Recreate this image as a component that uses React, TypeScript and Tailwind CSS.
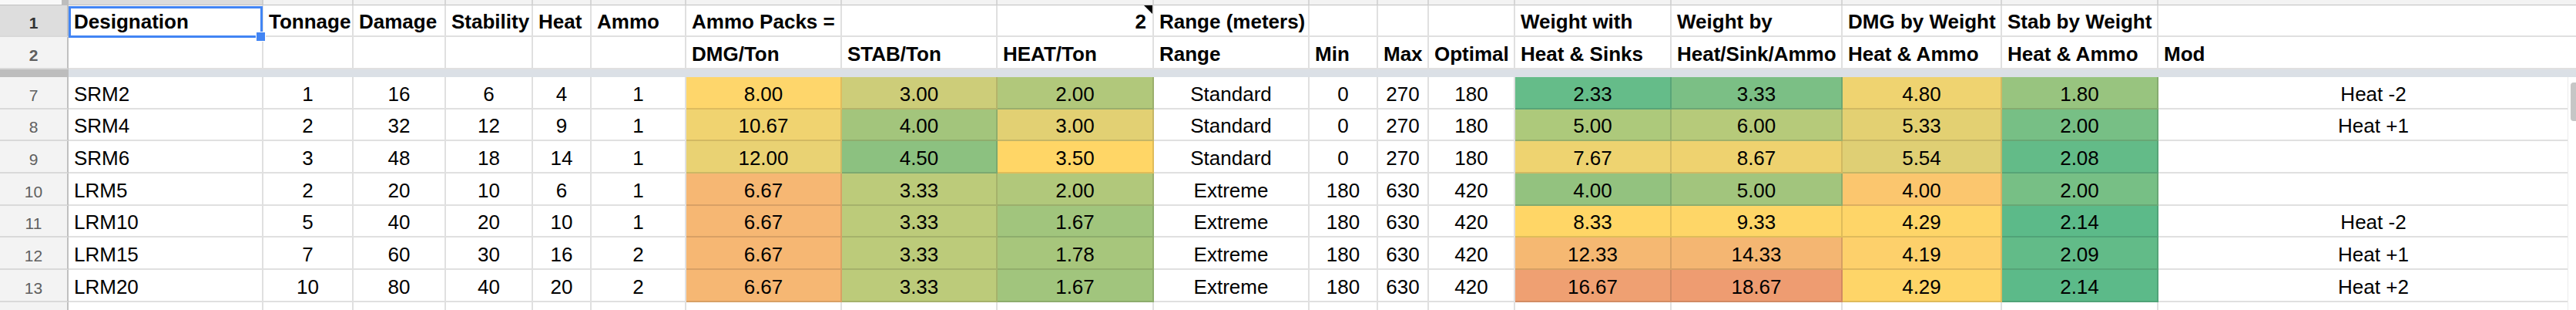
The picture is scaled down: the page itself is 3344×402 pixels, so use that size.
const COLS =
  "grid grid-cols-[89px_253px_117px_120px_113px_76px_123px_202px_202px_203px_202px_89px_66px_112px_203px_222px_207px_203px_560px]";

type Cell = { v: string; bg?: string };

const headerOne = [
  "Tonnage",
  "Damage",
  "Stability",
  "Heat",
  "Ammo",
  "Ammo Packs =",
  "",
  "2",
  "Range (meters)",
  "",
  "",
  "",
  "Weight with",
  "Weight by",
  "DMG by Weight",
  "Stab by Weight",
  "",
];

const headerTwo = [
  "",
  "",
  "",
  "",
  "",
  "",
  "DMG/Ton",
  "STAB/Ton",
  "HEAT/Ton",
  "Range",
  "Min",
  "Max",
  "Optimal",
  "Heat & Sinks",
  "Heat/Sink/Ammo",
  "Heat & Ammo",
  "Heat & Ammo",
  "Mod",
];

const rows: { n: number; name: string; cells: Cell[] }[] = [
  {
    n: 7,
    name: "SRM2",
    cells: [
      { v: "1" }, { v: "16" }, { v: "6" }, { v: "4" }, { v: "1" },
      { v: "8.00", bg: "bg-[#fed66b]" },
      { v: "3.00", bg: "bg-[#cdcd79]" },
      { v: "2.00", bg: "bg-[#b1c87b]" },
      { v: "Standard" }, { v: "0" }, { v: "270" }, { v: "180" },
      { v: "2.33", bg: "bg-[#65bc89]" },
      { v: "3.33", bg: "bg-[#7bbf85]" },
      { v: "4.80", bg: "bg-[#efd370]" },
      { v: "1.80", bg: "bg-[#98c47f]" },
      { v: "Heat -2" },
    ],
  },
  {
    n: 8,
    name: "SRM4",
    cells: [
      { v: "2" }, { v: "32" }, { v: "12" }, { v: "9" }, { v: "1" },
      { v: "10.67", bg: "bg-[#f0d370]" },
      { v: "4.00", bg: "bg-[#a3c57c]" },
      { v: "3.00", bg: "bg-[#e2d073]" },
      { v: "Standard" }, { v: "0" }, { v: "270" }, { v: "180" },
      { v: "5.00", bg: "bg-[#adc97b]" },
      { v: "6.00", bg: "bg-[#b6ca7a]" },
      { v: "5.33", bg: "bg-[#e3d072]" },
      { v: "2.00", bg: "bg-[#77bf85]" },
      { v: "Heat +1" },
    ],
  },
  {
    n: 9,
    name: "SRM6",
    cells: [
      { v: "3" }, { v: "48" }, { v: "18" }, { v: "14" }, { v: "1" },
      { v: "12.00", bg: "bg-[#e9d273]" },
      { v: "4.50", bg: "bg-[#8cc180]" },
      { v: "3.50", bg: "bg-[#ffd666]" },
      { v: "Standard" }, { v: "0" }, { v: "270" }, { v: "180" },
      { v: "7.67", bg: "bg-[#eed370]" },
      { v: "8.67", bg: "bg-[#eed26f]" },
      { v: "5.54", bg: "bg-[#dfcf74]" },
      { v: "2.08", bg: "bg-[#63bb88]" },
      { v: "" },
    ],
  },
  {
    n: 10,
    name: "LRM5",
    cells: [
      { v: "2" }, { v: "20" }, { v: "10" }, { v: "6" }, { v: "1" },
      { v: "6.67", bg: "bg-[#f6b773]" },
      { v: "3.33", bg: "bg-[#bccb7a]" },
      { v: "2.00", bg: "bg-[#b1c87b]" },
      { v: "Extreme" }, { v: "180" }, { v: "630" }, { v: "420" },
      { v: "4.00", bg: "bg-[#93c27f]" },
      { v: "5.00", bg: "bg-[#a2c57d]" },
      { v: "4.00", bg: "bg-[#fbc66e]" },
      { v: "2.00", bg: "bg-[#77bf85]" },
      { v: "" },
    ],
  },
  {
    n: 11,
    name: "LRM10",
    cells: [
      { v: "5" }, { v: "40" }, { v: "20" }, { v: "10" }, { v: "1" },
      { v: "6.67", bg: "bg-[#f6b773]" },
      { v: "3.33", bg: "bg-[#bccb7a]" },
      { v: "1.67", bg: "bg-[#a1c57d]" },
      { v: "Extreme" }, { v: "180" }, { v: "630" }, { v: "420" },
      { v: "8.33", bg: "bg-[#ffd666]" },
      { v: "9.33", bg: "bg-[#fed667]" },
      { v: "4.29", bg: "bg-[#fed568]" },
      { v: "2.14", bg: "bg-[#5cba89]" },
      { v: "Heat -2" },
    ],
  },
  {
    n: 12,
    name: "LRM15",
    cells: [
      { v: "7" }, { v: "60" }, { v: "30" }, { v: "16" }, { v: "2" },
      { v: "6.67", bg: "bg-[#f6b773]" },
      { v: "3.33", bg: "bg-[#bccb7a]" },
      { v: "1.78", bg: "bg-[#a7c67c]" },
      { v: "Extreme" }, { v: "180" }, { v: "630" }, { v: "420" },
      { v: "12.33", bg: "bg-[#f5b872]" },
      { v: "14.33", bg: "bg-[#f4b672]" },
      { v: "4.19", bg: "bg-[#fdd06b]" },
      { v: "2.09", bg: "bg-[#62bb88]" },
      { v: "Heat +1" },
    ],
  },
  {
    n: 13,
    name: "LRM20",
    cells: [
      { v: "10" }, { v: "80" }, { v: "40" }, { v: "20" }, { v: "2" },
      { v: "6.67", bg: "bg-[#f6b773]" },
      { v: "3.33", bg: "bg-[#bccb7a]" },
      { v: "1.67", bg: "bg-[#a1c57d]" },
      { v: "Extreme" }, { v: "180" }, { v: "630" }, { v: "420" },
      { v: "16.67", bg: "bg-[#efa072]" },
      { v: "18.67", bg: "bg-[#ee9c71]" },
      { v: "4.29", bg: "bg-[#fed568]" },
      { v: "2.14", bg: "bg-[#5cba89]" },
      { v: "Heat +2" },
    ],
  },
];

function RowNum({ n, active }: { n?: number; active?: boolean }) {
  return (
    <div
      className={`flex items-end justify-center pb-[6px] border-r-2 border-b-2 border-r-[#c0c0c0] border-b-[#d9d9d9] text-[21px] leading-none ${
        active ? "bg-[#dddddd] text-[#333]" : "bg-[#f3f3f3] text-[#5f5f5f]"
      }`}
    >
      {n}
    </div>
  );
}

export default function App() {
  return (
    <div className="relative w-[3344px] h-[402px] overflow-hidden bg-white text-black font-['Liberation_Sans',Arial,sans-serif] text-[26px]">
      {/* column letters strip, cut off at the top */}
      <div className={`${COLS} h-[7px]`}>
        <div className="flex justify-end bg-[#f8f8f8] border-b border-[#c0c0c0]">
          <div className="w-[9px] bg-[#bdbdbd]" />
        </div>
        <div className="bg-[#dcdcdc] border-r-2 border-b border-r-[#cfcfcf] border-b-[#c0c0c0]" />
        {Array.from({ length: 17 }).map((_, i) => (
          <div key={i} className="bg-[#f3f3f3] border-r-2 border-b border-r-[#d6d6d6] border-b-[#c0c0c0]" />
        ))}
      </div>

      {/* row 1 */}
      <div className={`${COLS} h-[41px] font-bold`}>
        <RowNum n={1} active />
        <div className="relative flex items-end pl-[7px] pb-[5px] leading-none border-r-2 border-b-2 border-black/12">
          Designation
          <div className="absolute left-0 top-px w-[252px] h-[41px] border-[3px] border-[#4285f4] pointer-events-none" />
          <div className="absolute left-[243px] top-[34px] w-[13px] h-[13px] bg-[#4285f4] border border-white" />
        </div>
        {headerOne.map((t, i) =>
          t === "2" ? (
            <div key={i} className="relative flex items-end justify-end pr-[8px] pb-[5px] leading-none border-r-2 border-b-2 border-black/12">
              2
              <svg className="absolute top-0 right-0" width="11" height="11" viewBox="0 0 11 11">
                <polygon points="0,0 11,0 11,11" fill="#000" />
              </svg>
            </div>
          ) : (
            <div key={i} className="flex items-end pl-[7px] pb-[5px] leading-none whitespace-nowrap border-r-2 border-b-2 border-black/12">
              {t}
            </div>
          )
        )}
      </div>

      {/* row 2 */}
      <div className={`${COLS} h-[42px] font-bold`}>
        <RowNum n={2} />
        {headerTwo.map((t, i) => (
          <div key={i} className="flex items-end pl-[7px] pb-[5px] leading-none whitespace-nowrap border-r-2 border-b-2 border-black/12">
            {t}
          </div>
        ))}
      </div>

      {/* frozen rows divider */}
      <div className={`${COLS} h-[10px]`}>
        <div className="bg-[#bdbdbd]" />
        <div className="col-span-18 bg-[#dbe0e6]" />
      </div>

      {rows.map((r) => (
        <div key={r.n} className={`${COLS} h-[41.7px]`}>
          <RowNum n={r.n} />
          <div className="flex items-end pl-[7px] pb-[5px] leading-none border-r-2 border-b-2 border-black/12">
            {r.name}
          </div>
          {r.cells.map((c, i) => (
            <div
              key={i}
              className={`flex items-end justify-center pb-[5px] leading-none whitespace-nowrap border-r-2 border-b-2 border-black/12 ${
                c.bg ?? "bg-white"
              }`}
            >
              {c.v}
            </div>
          ))}
        </div>
      ))}

      {/* next row, cut off at the bottom */}
      <div className={`${COLS} h-[10px]`}>
        <div className="bg-[#f3f3f3] border-r-2 border-[#c0c0c0]" />
        {Array.from({ length: 18 }).map((_, i) => (
          <div key={i} className="border-r-2 border-black/12" />
        ))}
      </div>

      {/* vertical scrollbar */}
      <div className="absolute right-0 top-[100px] bottom-0 w-[11px] bg-white border-l border-[#ebebeb]">
        <div className="absolute right-0 top-[7px] w-[7px] h-[50px] rounded-l-sm bg-[#c6c6c6]" />
      </div>
    </div>
  );
}
